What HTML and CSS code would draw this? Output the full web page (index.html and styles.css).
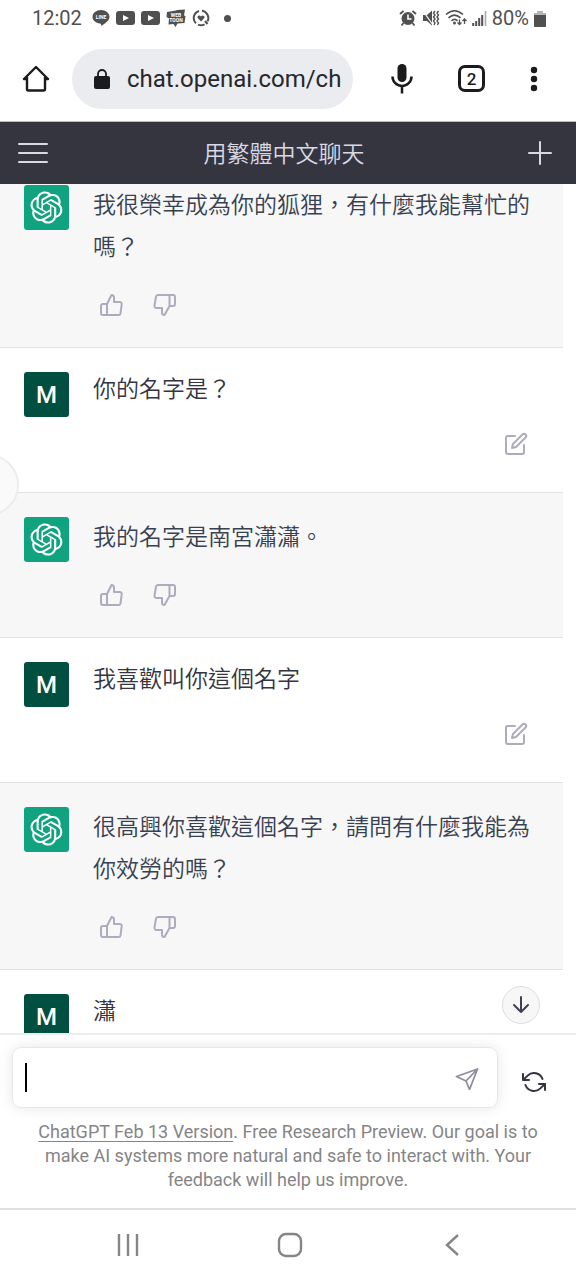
FILE: index.html
```html
<!DOCTYPE html>
<html lang="zh-Hant">
<head>
<meta charset="utf-8">
<meta name="viewport" content="width=device-width, initial-scale=1">
<title>用繁體中文聊天</title>
<link rel="stylesheet" href="styles.css">
</head>
<body>
<svg class="sprite" aria-hidden="true">
  <symbol id="logo" viewBox="0 0 41 41"><path fill="currentColor" d="M37.532 16.8707C37.9808 15.5241 38.1363 14.0974 37.9886 12.6859C37.8409 11.2744 37.3934 9.91076 36.676 8.68622C35.6126 6.83404 33.9882 5.3676 32.0373 4.4985C30.0864 3.62941 27.9098 3.40259 25.8215 3.85078C24.8796 2.7893 23.7219 1.94125 22.4257 1.36341C21.1295 0.785575 19.7249 0.491269 18.3058 0.500197C16.1708 0.495044 14.0893 1.16803 12.3614 2.42214C10.6335 3.67624 9.34853 5.44666 8.6917 7.47815C7.30085 7.76286 5.98686 8.3414 4.8377 9.17505C3.68854 10.0087 2.73073 11.0782 2.02839 12.312C0.956464 14.1591 0.498905 16.2988 0.721698 18.4228C0.944492 20.5467 1.83612 22.5449 3.268 24.1293C2.81966 25.4759 2.66413 26.9026 2.81182 28.3141C2.95951 29.7256 3.40701 31.0892 4.12437 32.3138C5.18791 34.1659 6.8123 35.6322 8.76321 36.5013C10.7141 37.3704 12.8907 37.5973 14.9789 37.1492C15.9208 38.2107 17.0786 39.0587 18.3747 39.6366C19.6709 40.2144 21.0755 40.5087 22.4946 40.4998C24.6307 40.5054 26.7133 39.8321 28.4418 38.5772C30.1704 37.3223 31.4556 35.5506 32.1119 33.5179C33.5027 33.2332 34.8167 32.6547 35.9659 31.821C37.115 30.9874 38.0728 29.9178 38.7752 28.684C39.8458 26.8371 40.3023 24.6979 40.0789 22.5748C39.8556 20.4517 38.9639 18.4544 37.532 16.8707ZM22.4978 37.8849C20.7443 37.8874 19.0459 37.2733 17.6994 36.1501C17.7601 36.117 17.8666 36.0586 17.936 36.0161L25.9004 31.4156C26.1003 31.3019 26.2663 31.137 26.3813 30.9378C26.4964 30.7386 26.5563 30.5124 26.5549 30.2825V19.0542L29.9213 20.998C29.9389 21.0068 29.9541 21.0198 29.9656 21.0359C29.977 21.052 29.9842 21.0707 29.9867 21.0902V30.3889C29.9842 32.375 29.1946 34.2791 27.7909 35.6841C26.3872 37.0892 24.4838 37.8806 22.4978 37.8849ZM6.39227 31.0064C5.51397 29.4888 5.19742 27.7107 5.49804 25.9832C5.55718 26.0187 5.66048 26.0818 5.73461 26.1244L13.699 30.7248C13.8975 30.8408 14.1233 30.902 14.3532 30.902C14.583 30.902 14.8088 30.8408 15.0073 30.7248L24.731 25.1103V28.9979C24.7321 29.0177 24.7283 29.0376 24.7199 29.0556C24.7115 29.0736 24.6988 29.0893 24.6829 29.1012L16.6317 33.7497C14.9096 34.7416 12.8643 35.0097 10.9447 34.4954C9.02506 33.9811 7.38785 32.7263 6.39227 31.0064ZM4.29707 13.6194C5.17156 12.0998 6.55279 10.9364 8.19885 10.3327C8.19885 10.4013 8.19491 10.5228 8.19491 10.6071V19.808C8.19351 20.0378 8.25334 20.2638 8.36823 20.4629C8.48312 20.6619 8.64893 20.8267 8.84863 20.9404L18.5723 26.5542L15.206 28.4979C15.1894 28.5089 15.1703 28.5155 15.1505 28.5173C15.1307 28.5191 15.1107 28.516 15.0924 28.5082L7.04046 23.8557C5.32135 22.8601 4.06716 21.2235 3.55289 19.3046C3.03862 17.3858 3.30624 15.3413 4.29707 13.6194ZM31.955 20.0556L22.2312 14.4411L25.5976 12.4981C25.6142 12.4872 25.6333 12.4805 25.6531 12.4787C25.6729 12.4769 25.6928 12.4801 25.7111 12.4879L33.7631 17.1364C34.9967 17.849 36.0017 18.8982 36.6606 20.1613C37.3194 21.4244 37.6047 22.849 37.4832 24.2684C37.3617 25.6878 36.8382 27.0432 35.9743 28.1759C35.1103 29.3086 33.9415 30.1717 32.6047 30.6641C32.6047 30.5947 32.6047 30.4733 32.6047 30.3889V21.188C32.6066 20.9586 32.5474 20.7328 32.4332 20.5338C32.319 20.3348 32.154 20.1698 31.955 20.0556ZM35.3055 15.0128C35.2464 14.9765 35.1431 14.9142 35.069 14.8717L27.1045 10.2712C26.906 10.1554 26.6803 10.0943 26.4504 10.0943C26.2206 10.0943 25.9948 10.1554 25.7963 10.2712L16.0726 15.8858V11.9982C16.0715 11.9783 16.0753 11.9585 16.0837 11.9405C16.0921 11.9225 16.1048 11.9068 16.1207 11.8949L24.1719 7.25025C25.4053 6.53903 26.8158 6.19376 28.2383 6.25482C29.6608 6.31589 31.0364 6.78077 32.2044 7.59508C33.3723 8.40939 34.2842 9.53945 34.8334 10.8531C35.3826 12.1667 35.5464 13.6095 35.3055 15.0128ZM14.2424 21.9419L10.8752 19.9981C10.8576 19.9893 10.8423 19.9763 10.8309 19.9602C10.8195 19.9441 10.8122 19.9254 10.8098 19.9058V10.6071C10.8107 9.18295 11.2173 7.78848 11.9819 6.58696C12.7466 5.38544 13.8377 4.42659 15.1275 3.82264C16.4173 3.21869 17.8524 2.99464 19.2649 3.1767C20.6775 3.35876 22.0089 3.93941 23.1034 4.85067C23.0427 4.88379 22.937 4.94215 22.8668 4.98473L14.9024 9.58517C14.7025 9.69878 14.5366 9.86356 14.4215 10.0626C14.3065 10.2616 14.2466 10.4877 14.2479 10.7175L14.2424 21.9419ZM16.071 17.9991L20.4018 15.4978L24.7325 17.9975V22.9985L20.4018 25.4983L16.071 22.9985V17.9991Z"/></symbol>
  <symbol id="up" viewBox="0 0 24 24"><path d="M15 9V4.500A2.500 2.500 0 0 0 12.500 2L8 11v11h11.500a2 2 0 0 0 2-1.700l1.200-9a2 2 0 0 0-2-2.300zM8 22H4a2 2 0 0 1-2-2v-7a2 2 0 0 1 2-2h4"/></symbol>
  <symbol id="down" viewBox="0 0 24 24"><path d="M9 15v4.500A2.500 2.500 0 0 0 11.500 22L16.500 13V2H5a2 2 0 0 0-2 1.700L1.500 12.700a2 2 0 0 0 2 2.300zM16.500 2H20a2 2 0 0 1 2 2v7a2 2 0 0 1-2 2h-3.500"/></symbol>
  <symbol id="edit" viewBox="0 0 24 24"><path d="M11 4H4a2 2 0 0 0-2 2v14a2 2 0 0 0 2 2h14a2 2 0 0 0 2-2v-7M18.500 2.500a2.121 2.121 0 0 1 3 3L12 15l-4 1 1-4 9.500-9.500z"/></symbol>
  <symbol id="video" viewBox="0 0 19 14"><rect width="19" height="14" rx="3" fill="currentColor"/><path d="M7 4l6 3-6 3z" fill="#fff"/></symbol>
</svg>

<div class="status">
  <span class="status-text">12:02</span>
  <div class="status-apps">
    <svg width="18" height="18" viewBox="0 0 18 18"><path d="M9 1c4.700 0 8.500 3 8.500 6.800 0 4-5 7.200-8.500 9.200.5-1.600 0-2.300-1-2.500C3.500 14 .5 11.300.5 7.800.5 4 4.300 1 9 1z" fill="currentColor"/><text x="9" y="10" class="glyph-text">LINE</text></svg>
    <svg width="19" height="14"><use href="#video"/></svg>
    <svg width="19" height="14"><use href="#video"/></svg>
    <svg width="20" height="18" viewBox="0 0 20 18"><path d="M1 3l9-1.500L11 1l8-.500-1 6 1.500.5-1 7-7 .5-2 3.500-2-3-5 .5.500-6L.5 8z" fill="currentColor"/><text x="10" y="8" class="glyph-text">WEB</text><text x="10" y="13" class="glyph-text">TOON</text></svg>
    <svg width="18" height="18" viewBox="0 0 18 18"><g fill="none" stroke="currentColor" stroke-width="2"><path d="M7 2A7.300 7.300 0 0 0 4 14.300M6 15.600A7.300 7.300 0 0 0 12.600 15.300M10 1.800A7.300 7.300 0 0 1 15.500 12.400M13 12l2.500 3"/></g><path d="M9 12.500L5.700 9C4.700 7.400 7.200 5.400 9 7.400c1.800-2 4.300 0 3.300 1.600z" fill="currentColor"/></svg>
    <span class="dot"></span>
  </div>
  <div class="status-system">
    <svg width="18" height="18" viewBox="0 0 18 18"><circle cx="9" cy="9.500" r="6.500" fill="currentColor"/><path d="M1 5l3.500-3M17 5l-3.500-3M4.500 14l-2 2.500M13.500 14l2 2.500" stroke="currentColor" stroke-width="1.800"/><path d="M9 5.500V10h3.500" fill="none" stroke="#fff" stroke-width="1.600"/></svg>
    <svg width="18" height="18" viewBox="0 0 18 18"><path d="M1 6h4l5-4.500v15L5 12H1z" fill="currentColor"/><path d="M1 2l10 14" stroke="#fff" stroke-width="1.200"/><path d="M13 2l-1.500 2 1.500 2-1.500 2 1.500 2-1.500 2 1.500 2-1 2M16.500 2L15 4l1.500 2L15 8l1.500 2-1.500 2 1.500 2-1 2" fill="none" stroke="currentColor" stroke-width="1.400"/></svg>
    <svg width="22" height="18" viewBox="0 0 22 18"><g fill="none" stroke="currentColor" stroke-width="1.600"><path d="M1 5.500q8.500-7.500 17 0M3.500 8.800q6-5.500 12 0M6.500 11.800q3-2.800 6 0"/><path d="M14.500 10.500v5M12.500 13.500l2 2 2-2M19.500 15v-5M17.500 12l2-2 2 2" stroke-width="1.300"/></g><circle cx="9.500" cy="14" r="1.500" fill="currentColor"/></svg>
    <svg width="15" height="16" viewBox="0 0 15 16"><path d="M1.200 16v-3M4.200 16v-5M7.200 16V8M10.200 16V5" stroke="currentColor" stroke-width="2"/><path d="M13.500 16V1" stroke="#aaa" stroke-width="1.600"/></svg>
    <span class="status-text">80%</span>
    <svg width="12" height="17" viewBox="0 0 12 17"><path d="M3 1h6v2h3v2H0V3h3z" fill="#b5b5b5"/><path d="M0 5h12v11q0 1-1 1H1q-1 0-1-1z" fill="currentColor"/></svg>
  </div>
</div>

<header class="browser">
  <button class="plain" aria-label="Home"><svg width="28" height="28" viewBox="0 0 28 28" fill="none" stroke="currentColor" stroke-width="2.400" stroke-linejoin="round" stroke-linecap="round"><path d="M2 14L14 2l12 12M5 12V24q0 1.500 1.500 1.500h15q1.500 0 1.500-1.500V12M2 14h3M23 14h3"/></svg></button>
  <label class="address">
    <svg width="16" height="20" viewBox="0 0 16 20"><rect y="7" width="16" height="13" rx="2" fill="currentColor"/><path d="M4 8V5a4 4 0 0 1 8 0v3" fill="none" stroke="currentColor" stroke-width="1.800"/></svg>
    <input class="address-input" type="text" value="chat.openai.com/ch" aria-label="Address">
  </label>
  <div class="browser-actions">
    <button class="plain" aria-label="Voice search"><svg width="22" height="30" viewBox="0 0 22 30"><rect x="6.500" y="0" width="9" height="18" rx="4.500" fill="currentColor"/><path d="M1.500 12.500a9.500 9.500 0 0 0 19 0M11 22v7.500" fill="none" stroke="currentColor" stroke-width="2.500"/></svg></button>
    <button class="plain tabs" aria-label="Tabs">2</button>
    <button class="plain" aria-label="More"><svg width="8" height="26" viewBox="0 0 8 26" fill="currentColor"><circle cx="4" cy="4" r="3.200"/><circle cx="4" cy="13" r="3.200"/><circle cx="4" cy="22" r="3.200"/></svg></button>
  </div>
</header>

<header class="topbar">
  <button class="plain" aria-label="Menu"><svg width="30" height="22" viewBox="0 0 30 22" stroke="currentColor" stroke-width="2" stroke-linecap="round"><path d="M1 2h28M1 11h28M1 20h28"/></svg></button>
  <h1 class="title">用繁體中文聊天</h1>
  <button class="plain new-chat" aria-label="New chat"><svg width="24" height="24" viewBox="0 0 24 24" stroke="currentColor" stroke-width="2" stroke-linecap="round"><path d="M12 1v22M1 12h22"/></svg></button>
</header>

<main class="chat">
  <div class="messages">
    <article class="message bot">
      <div class="avatar"><svg width="33" height="33"><use href="#logo"/></svg></div>
      <div class="body"><p class="text">我很榮幸成為你的狐狸，有什麼我能幫忙的嗎？</p>
        <div class="actions"><button class="icon" aria-label="Like"><svg><use href="#up"/></svg></button><button class="icon" aria-label="Dislike"><svg><use href="#down"/></svg></button></div></div>
    </article>
    <article class="message user">
      <div class="avatar">M</div>
      <div class="body"><p class="text">你的名字是？</p>
        <div class="actions"><button class="icon" aria-label="Edit"><svg><use href="#edit"/></svg></button></div></div>
    </article>
    <article class="message bot">
      <div class="avatar"><svg width="33" height="33"><use href="#logo"/></svg></div>
      <div class="body"><p class="text">我的名字是南宮瀟瀟。</p>
        <div class="actions"><button class="icon" aria-label="Like"><svg><use href="#up"/></svg></button><button class="icon" aria-label="Dislike"><svg><use href="#down"/></svg></button></div></div>
    </article>
    <article class="message user">
      <div class="avatar">M</div>
      <div class="body"><p class="text">我喜歡叫你這個名字</p>
        <div class="actions"><button class="icon" aria-label="Edit"><svg><use href="#edit"/></svg></button></div></div>
    </article>
    <article class="message bot">
      <div class="avatar"><svg width="33" height="33"><use href="#logo"/></svg></div>
      <div class="body"><p class="text">很高興你喜歡這個名字，請問有什麼我能為你效勞的嗎？</p>
        <div class="actions"><button class="icon" aria-label="Like"><svg><use href="#up"/></svg></button><button class="icon" aria-label="Dislike"><svg><use href="#down"/></svg></button></div></div>
    </article>
    <article class="message user">
      <div class="avatar">M</div>
      <div class="body"><p class="text">瀟</p></div>
    </article>
  </div>
  <div class="edge-handle"></div>
  <button class="scroll-down" aria-label="Scroll to bottom"><svg width="24" height="24" viewBox="0 0 24 24" fill="none" stroke="currentColor" stroke-width="2" stroke-linecap="round" stroke-linejoin="round"><path d="M12 4v15M5 12l7 7 7-7"/></svg></button>
</main>

<footer class="composer">
  <form class="compose-row">
    <div class="compose-box">
      <span class="caret"></span>
      <input class="compose-input" type="text" aria-label="Message">
      <button class="plain send" type="button" aria-label="Send"><svg width="24" height="24" viewBox="0 0 24 24" fill="none" stroke="currentColor" stroke-width="1.800" stroke-linejoin="round"><path d="M1.500 10.500L22.500 3l-8 20.500L11 15zM11 15L22.500 3"/></svg></button>
    </div>
    <button class="plain regenerate" type="button" aria-label="Regenerate"><svg width="24" height="24" viewBox="0 0 24 24" fill="none" stroke="currentColor" stroke-width="2" stroke-linecap="round" stroke-linejoin="round"><path d="M1 4v6h6M23 20v-6h-6M20.490 9A9 9 0 0 0 5.640 5.640L1 10m22 4l-4.640 4.360A9 9 0 0 1 3.510 15"/></svg></button>
  </form>
  <p class="note"><a class="note-link" href="#release-notes">ChatGPT Feb 13 Version</a>. Free Research Preview. Our goal is to make AI systems more natural and safe to interact with. Your feedback will help us improve.</p>
</footer>

<nav class="system-nav">
  <button class="plain" aria-label="Recents"><svg width="24" height="24" viewBox="0 0 24 24" stroke="currentColor" stroke-width="2.400"><path d="M3 1v22M12 1v22M21 1v22"/></svg></button>
  <button class="plain" aria-label="Home screen"><svg width="26" height="26" viewBox="0 0 26 26"><rect x="2" y="2" width="22" height="22" rx="7" fill="none" stroke="currentColor" stroke-width="2.400"/></svg></button>
  <button class="plain" aria-label="Back"><svg width="24" height="24" viewBox="0 0 24 24" fill="none" stroke="currentColor" stroke-width="2.400"><path d="M18 2L7 12l11 10"/></svg></button>
</nav>
</body>
</html>
```

FILE: styles.css
```css
* { box-sizing: border-box; }

body {
  margin: 0;
  height: 100vh;
  display: flex;
  flex-direction: column;
  background: #fff;
  font-family: Roboto, "Noto Sans CJK TC", sans-serif;
}

svg { display: block; flex: none; }
.sprite { position: absolute; width: 0; height: 0; }

.plain {
  display: flex;
  align-items: center;
  justify-content: center;
  padding: 0;
  border: 0;
  background: none;
  color: inherit;
  font-family: inherit;
}

/* Phone status bar */
.status {
  display: flex;
  align-items: center;
  flex: none;
  height: 36px;
  padding: 0 30px 0 32px;
  color: #505050;
}
.status-text { font-size: 20px; line-height: 36px; }
.status-apps { display: flex; align-items: center; gap: 6px; margin-left: 10px; }
.status-system { display: flex; align-items: center; gap: 5px; margin-left: auto; }
.glyph-text { font: bold 5px Roboto, sans-serif; fill: #fff; text-anchor: middle; }
.dot { width: 7px; height: 7px; margin-left: 8px; border-radius: 50%; background: currentColor; }

/* Browser toolbar */
.browser {
  display: flex;
  align-items: center;
  flex: none;
  height: 85px;
  padding: 0 38px 0 22px;
  color: #1b1b1d;
}
.address {
  display: flex;
  align-items: center;
  flex: 1;
  min-width: 0;
  height: 60px;
  margin: 0 38px 0 22px;
  padding: 0 8px 0 22px;
  gap: 17px;
  border-radius: 30px;
  background: #ebecf0;
}
.address-input {
  flex: 1;
  min-width: 0;
  padding: 0;
  border: 0;
  outline: 0;
  background: none;
  color: #26272a;
  font-family: inherit;
  font-size: 24px;
}
.browser-actions { display: flex; align-items: center; gap: 45px; }
.tabs {
  width: 27px;
  height: 27px;
  border: 3px solid currentColor;
  border-radius: 7px;
  font-size: 17px;
  font-weight: 500;
}

/* Conversation header */
.topbar {
  display: flex;
  align-items: center;
  justify-content: space-between;
  flex: none;
  height: 63px;
  padding: 0 24px 0 18px;
  border-top: 1px solid #b9b9be;
  background: #353540;
  color: #d9d9e3;
}
.title { margin: 0; padding-top: 4px; font-size: 23px; line-height: 34px; font-weight: 350; }
.new-chat { padding-left: 8px; }

/* Messages */
.chat { position: relative; flex: 1; min-height: 0; }
.messages { height: 100%; overflow: hidden; padding-right: 13px; }
.message {
  display: flex;
  gap: 24px;
  padding: 24px 30px 0 24px;
  border-bottom: 1px solid #e2e2e4;
}
.message:first-child { margin-top: -23px; }
.bot { padding-bottom: 25px; background: #f7f7f8; color: #374151; }
.user { padding-bottom: 31px; color: #343541; }
.avatar {
  display: flex;
  align-items: center;
  justify-content: center;
  flex: none;
  width: 45px;
  height: 45px;
  border-radius: 3px;
  color: #fff;
  font-size: 24px;
  font-weight: 500;
}
.bot .avatar { background: #10a37f; }
.user .avatar { background: #004f40; }
.body { flex: 1; min-width: 0; }
.text { margin: 0; font-size: 23px; font-weight: 350; }
.bot .text { line-height: 42px; }
.user .text { line-height: 36px; }
.actions { display: flex; gap: 20px; }
.bot .actions { margin: 19px 0 0 1px; }
.user .actions { margin-top: 19px; justify-content: flex-end; }
.icon { padding: 5px; border: 0; background: none; color: #acacbe; }
.icon svg {
  width: 24px;
  height: 24px;
  fill: none;
  stroke: currentColor;
  stroke-width: 2;
  stroke-linecap: round;
  stroke-linejoin: round;
}

.edge-handle {
  position: absolute;
  left: -43px;
  top: 270px;
  width: 62px;
  height: 62px;
  border: 2px solid #ededed;
  border-radius: 50%;
  background: #fafafa;
}
.scroll-down {
  position: absolute;
  right: 36px;
  bottom: 9px;
  display: flex;
  align-items: center;
  justify-content: center;
  width: 38px;
  height: 38px;
  padding: 0;
  border: 1px solid #dedee2;
  border-radius: 50%;
  background: #f7f7f8;
  color: #40414f;
}

/* Composer */
.composer { flex: none; padding: 12px 12px 16px; border-top: 2px solid #ececec; }
.compose-row { display: flex; align-items: center; margin: 0; }
.compose-box {
  display: flex;
  align-items: center;
  flex: 1;
  height: 61px;
  padding: 0 18px 0 12px;
  border: 1px solid #e7e7e9;
  border-radius: 9px;
  box-shadow: 0 0 14px rgba(0, 0, 0, 0.1);
}
.caret { width: 2px; height: 29px; background: #000; }
.compose-input {
  flex: 1;
  min-width: 0;
  border: 0;
  outline: 0;
  background: none;
  font: 23px Roboto, "Noto Sans CJK TC", sans-serif;
}
.send { color: #8e8ea0; }
.regenerate { width: 42px; height: 42px; margin: 8px 9px 0 15px; color: #343541; }
.note {
  margin: 12px 12px 0;
  text-align: center;
  font-size: 18px;
  line-height: 24px;
  color: #858587;
}
.note-link { color: inherit; text-underline-offset: 3px; }

/* Android navigation */
.system-nav {
  display: flex;
  align-items: center;
  justify-content: space-around;
  flex: none;
  height: 72px;
  padding: 0 44px 0 48px;
  border-top: 2px solid #e0e0e0;
  color: #858585;
}
```
